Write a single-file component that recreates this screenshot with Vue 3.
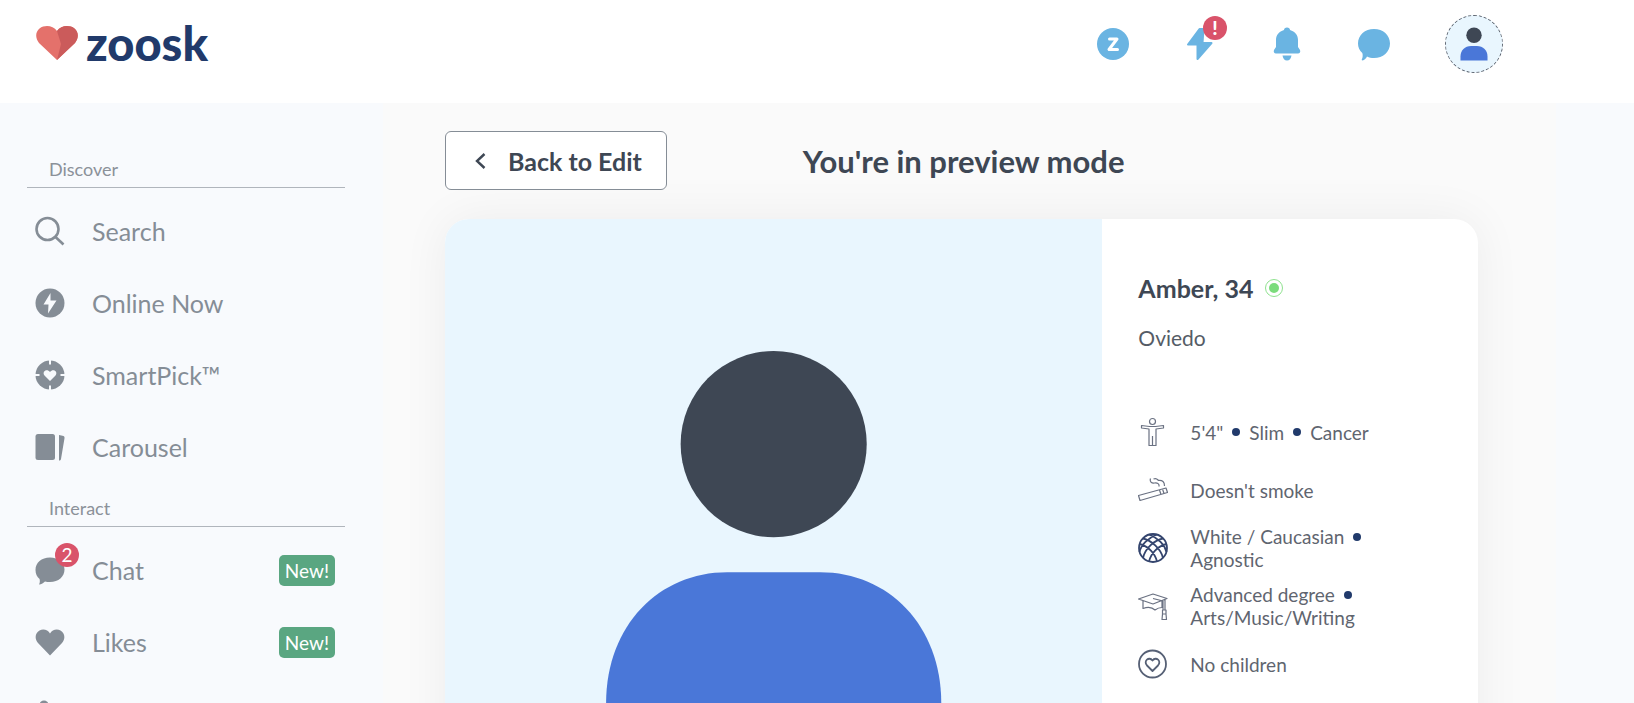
<script setup>
const discover = [
  { label: 'Search', icon: 'search' },
  { label: 'Online Now', icon: 'online' },
  { label: 'SmartPick™', icon: 'smartpick' },
  { label: 'Carousel', icon: 'carousel' }
]

const interact = [
  { label: 'Chat', icon: 'chat', count: 2, isNew: true },
  { label: 'Likes', icon: 'likes', isNew: true },
  { icon: 'people' }
]

const sections = [
  { title: 'Discover', items: discover },
  { title: 'Interact', items: interact }
]

// each detail is a list of lines, each line a list of values split by dots
const details = [
  { icon: 'body', lines: [['5\'4"', 'Slim', 'Cancer']] },
  { icon: 'smoke', lines: [["Doesn't smoke"]] },
  { icon: 'globe', lines: [['White / Caucasian', ''], ['Agnostic']] },
  { icon: 'degree', lines: [['Advanced degree', ''], ['Arts/Music/Writing']] },
  { icon: 'family', lines: [['No children']] }
]
</script>

<template>
  <div class="app">
    <header class="topbar">
      <a href="#" class="logo">
        <svg class="logo-heart" viewBox="0 0 42 36" aria-hidden="true">
          <path fill="#e4716b" d="M21 35 3 18C-1 13-.6 7 3.500 3.500 9-.5 17 .5 21 6 25 .5 33-.5 38.500 3.500 42.600 7 43 13 39 18Z" />
          <path fill="#cb5b5b" d="M21 6C25 .5 33-.5 38.500 3.500 42.600 7 43 13 39 18L21 35 25 19Z" />
        </svg>
        <span class="logo-text">zoosk</span>
      </a>
      <nav class="topnav">
        <a href="#" class="topnav-link" aria-label="Coins">
          <svg viewBox="0 0 32 32">
            <circle cx="16" cy="16" r="16" fill="#6ab4e2" />
            <path d="M12.500 11h7.500l-8 10.500h8.500" fill="none" stroke="#fff" stroke-width="3" stroke-linejoin="round" stroke-linecap="round" />
          </svg>
        </a>
        <a href="#" class="topnav-link" aria-label="Boost">
          <svg viewBox="0 0 32 32">
            <path d="M15.500 1 4 16.500h9.500L13.500 31 27.500 15h-9L19.500 1Z" fill="#6ab4e2" stroke="#6ab4e2" stroke-width="2" stroke-linejoin="round" />
          </svg>
          <span class="badge badge--top">!</span>
        </a>
        <a href="#" class="topnav-link" aria-label="Notifications">
          <svg viewBox="0 0 32 32" fill="#6ab4e2">
            <path d="M16-.5c1.800 0 3 1 3 2.500 5 1.500 8 5 8 10v7l2 3c.8 2-.3 3.500-2 3.500H5c-1.700 0-2.800-1.500-2-3.500l2-3v-7c0-5 3-8.500 8-10 0-1.500 1.200-2.500 3-2.500Z" />
            <path d="M11.500 27.500h9c-.5 3-2 5-4.500 5s-4-2-4.500-5Z" />
          </svg>
        </a>
        <a href="#" class="topnav-link" aria-label="Messages">
          <svg viewBox="0 0 32 32" fill="#6ab4e2">
            <path d="M16 1c9 0 16 6 16 14.500S25 30 16 30c-2.500 0-5-.5-7-1.500-1 2-2.500 3.500-4.500 4-.8 0-1-1-.5-1.500.7-1.500 1-4 .3-6C1.500 22.500 0 19.500 0 15.500 0 7 7 1 16 1Z" />
          </svg>
        </a>
        <a href="#" class="avatar" aria-label="Profile">
          <svg viewBox="0 0 58 58">
            <circle cx="29" cy="20" r="8" fill="#3e4754" />
            <path d="M15 46V42c0-6.500 4.500-11 11-11h6c6.500 0 11 4.500 11 11v4Z" fill="#4a77d8" />
          </svg>
        </a>
      </nav>
    </header>

    <div class="page">
      <aside class="sidebar">
        <section v-for="section in sections" :key="section.title" class="menu">
          <h2 class="menu-title">{{ section.title }}</h2>
          <ul class="menu-list">
            <li v-for="item in section.items" :key="item.icon">
              <a href="#" class="menu-item">
                <span class="menu-icon">
                  <svg v-if="item.icon === 'search'" viewBox="0 0 30 30" fill="none" stroke="#858d96" stroke-width="2.600">
                    <circle cx="12.500" cy="13" r="11" />
                    <path d="m20.500 21 8 7.500" />
                  </svg>
                  <svg v-else-if="item.icon === 'online'" viewBox="0 0 30 30">
                    <circle cx="15" cy="15" r="14.500" fill="#858d96" />
                    <path d="M15.500 5 8.500 16.500h5L13 25.500 21.500 12.500h-6Z" fill="#f8fafd" />
                  </svg>
                  <svg v-else-if="item.icon === 'smartpick'" viewBox="0 0 30 30">
                    <circle cx="15" cy="15" r="14.500" fill="#858d96" />
                    <path d="M15 0v4.500M15 25.500V30M0 15h4.500M25.500 15H30" stroke="#f8fafd" stroke-width="2" />
                    <path d="M15 21 9.500 15.500c-3-4 2.500-7.500 5.500-3.500 3-4 8.500-.5 5.500 3.500Z" fill="#f8fafd" />
                  </svg>
                  <svg v-else-if="item.icon === 'carousel'" viewBox="0 0 30 30" fill="#858d96">
                    <rect x=".5" y="2" width="19.500" height="26" rx="2.500" />
                    <path d="M24 3l3.500.7c1.500.2 2.300 1 2 2.500L26 27c-.2 1-1 1.500-2 1.500Z" />
                  </svg>
                  <svg v-else-if="item.icon === 'chat'" viewBox="0 0 30 30" fill="#858d96">
                    <path d="M15 2.500c8.500 0 14.500 5 14.500 12S23.500 27 15 27c-2 0-3.500-.2-5-.6-1.500 1.500-3.500 3-6 3.100 1-1.500 1-3.500.6-5.500C2 22 .5 19 .5 15c0-7.500 6-12.500 14.500-12.500Z" />
                  </svg>
                  <svg v-else-if="item.icon === 'likes'" viewBox="0 0 30 30" fill="#858d96">
                    <path d="M15 28.500 3 16C-1 11.500.5 5.500 4.500 3.500 8.500 1.500 13 3 15 6.500 17 3 21.500 1.500 25.500 3.500 29.500 5.500 31 11.500 27 16Z" />
                  </svg>
                  <svg v-else viewBox="0 0 30 30" fill="#858d96">
                    <circle cx="9" cy="6" r="4.500" />
                    <path d="M1 24c0-7 3-11 8-11s8 4 8 11Z" />
                  </svg>
                  <span v-if="item.count" class="badge badge--menu">{{ item.count }}</span>
                </span>
                <span v-if="item.label" class="menu-label">{{ item.label }}</span>
                <span v-if="item.isNew" class="tag">New!</span>
              </a>
            </li>
          </ul>
        </section>
      </aside>

      <main class="main">
        <div class="preview-bar">
          <button type="button" class="back">
            <svg class="back-icon" viewBox="0 0 12 16" aria-hidden="true">
              <path d="M10.500 1 3 8l7.500 7" fill="none" stroke="#3e4754" stroke-width="2.400" />
            </svg>
            Back to Edit
          </button>
          <h1 class="preview-title">You're in preview mode</h1>
        </div>

        <article class="card">
          <div class="photo">
            <svg viewBox="0 0 657 657" aria-hidden="true">
              <circle cx="328.500" cy="225" r="93" fill="#3e4754" />
              <path d="M161 529V484C161 406 214 353 282 353h93c68 0 121 53 121 131v45Z" fill="#4a77d8" />
            </svg>
          </div>
          <div class="info">
            <h2 class="name">Amber, 34 <span class="online"></span></h2>
            <p class="city">Oviedo</p>
            <ul class="details">
              <li v-for="detail in details" :key="detail.icon" class="detail">
                <svg v-if="detail.icon === 'body'" class="detail-icon" viewBox="0 0 30 30">
                  <circle cx="14.500" cy="4.500" r="3" />
                  <path d="M11.500 9.500 3.500 8.500v2.500l7.500 1V28.500h7V12l7.500-1V8.500l-8 1ZM14.500 19v9.500" />
                </svg>
                <svg v-else-if="detail.icon === 'smoke'" class="detail-icon" viewBox="0 0 30 30">
                  <path d="m.5 20.500 27.500-7.500 1.500 4.500L2 25.500ZM21.500 15l1.500 4.500M24.500 14l1.500 4.500M12.500 3.500c-1 3 1 5 4 4.500 3-.5 5 1 4.500 3.500M15.500 4c3-1.500 4 .5 5 1.500 4-.5 6 1.500 6 5.500" />
                </svg>
                <svg v-else-if="detail.icon === 'globe'" class="detail-icon detail-icon--globe" viewBox="0 0 30 30">
                  <circle cx="15" cy="15" r="14" />
                  <path d="M5 5.500C13 7 23 16 25 25M11 1.500C20 5 27 12 28.500 19M1.500 11C10 13 17 20 19 28.500M25 5.500C16 7 7 16 5 25M19 1.500C10 5 3 12 1.500 19M28.500 11C20 13 13 20 11 28.500" />
                </svg>
                <svg v-else-if="detail.icon === 'degree'" class="detail-icon" viewBox="0 0 30 30">
                  <path d="M.5 8 15 3l14 4.500-14 5.500ZM5 10v7.500c5-2 9-1.500 12 1.500 2-1.500 4-2.500 7-2.500V10M15 7.500l10 2.500v9M27 8.500V19M24.500 19h3.500v4h-3.500ZM24.500 23 24 28.500h4.500L28 23" />
                </svg>
                <svg v-else class="detail-icon detail-icon--family" viewBox="0 0 30 30">
                  <circle cx="14.500" cy="15" r="13.500" />
                  <path d="m14.500 22-5.500-5.500c-4-4.500 2-9.500 5.500-5 3.500-4.500 9.500.5 5.500 5Z" />
                </svg>
                <div class="detail-text">
                  <div v-for="(line, i) in detail.lines" :key="i" class="detail-line">
                    <template v-for="(value, j) in line" :key="j">
                      <span v-if="j > 0" class="dot"></span>
                      <span v-if="value">{{ value }}</span>
                    </template>
                  </div>
                </div>
              </li>
            </ul>
          </div>
        </article>
      </main>
    </div>
  </div>
</template>

<style>
body {
  margin: 0;
  background: #f8fafd;
}
</style>

<style scoped>
.app {
  display: flex;
  flex-direction: column;
  height: 100vh;
  overflow: hidden;
  font-family: Lato, "Liberation Sans", sans-serif;
  color: #3e4754;
}

svg {
  display: block;
}

a {
  color: inherit;
  text-decoration: none;
}

ul {
  list-style: none;
  margin: 0;
  padding: 0;
}

.topbar {
  display: flex;
  flex-shrink: 0;
  align-items: flex-start;
  justify-content: space-between;
  box-sizing: border-box;
  height: 103px;
  padding: 15px 131px 0 36px;
  background: #fff;
}

.logo {
  display: flex;
  align-items: center;
  gap: 8px;
}

.logo-heart {
  width: 42px;
  height: 36px;
}

.logo-text {
  font-size: 47px;
  line-height: 56px;
  font-weight: 900;
  color: #213a6b;
}

.topnav {
  display: flex;
  align-items: center;
  gap: 55px;
}

.topnav-link {
  position: relative;
  width: 32px;
  height: 32px;
}

.topnav-link svg {
  width: 32px;
  height: 32px;
  overflow: visible;
}

.badge {
  position: absolute;
  width: 24px;
  height: 24px;
  border-radius: 50%;
  background: #d9536a;
  color: #fff;
  font-size: 19px;
  line-height: 24px;
  text-align: center;
}

.badge--top {
  top: -12px;
  right: -11px;
  font-weight: 900;
}

.badge--menu {
  top: -12px;
  right: -14px;
}

.avatar {
  box-sizing: border-box;
  width: 58px;
  height: 58px;
  border: 1px dashed #5c6470;
  border-radius: 50%;
  background: #e9f6fe;
}

.page {
  display: flex;
  flex: 1;
  min-height: 0;
}

.sidebar {
  box-sizing: border-box;
  width: 383px;
  padding: 48px 38px 0 27px;
}

.menu-title {
  margin: 0;
  padding: 6px 22px;
  border-bottom: 1px solid #b0b5bc;
  color: #8b9199;
  font-size: 18px;
  line-height: 24px;
  font-weight: 400;
}

.menu-list {
  padding: 7px 0;
}

.menu-item {
  display: flex;
  align-items: center;
  height: 72px;
  padding: 0 10px 0 8px;
}

.menu-icon {
  position: relative;
  width: 30px;
  height: 30px;
  margin-right: 27px;
}

.menu-label {
  flex: 1;
  color: #858d96;
  font-size: 25px;
  line-height: 30px;
}

.tag {
  padding: 0 6px;
  border-radius: 5px;
  background: #5aa681;
  color: #fff;
  font-size: 19px;
  line-height: 31px;
}

.main {
  flex: 1;
  margin-right: 78px;
  padding: 28px 78px 0 62px;
  background: #fafafa;
}

.preview-bar {
  display: flex;
  align-items: center;
  margin-bottom: 29px;
}

.back {
  display: flex;
  align-items: center;
  gap: 22px;
  height: 59px;
  padding: 0 24px 0 28px;
  border: 1px solid #858d96;
  border-radius: 6px;
  background: #fff;
  color: #3e4754;
  font-family: inherit;
  font-size: 25px;
  font-weight: 700;
  cursor: pointer;
}

.back-icon {
  width: 12px;
  height: 16px;
}

.preview-title {
  margin: 0 0 0 136px;
  font-size: 31px;
  line-height: 36px;
  font-weight: 700;
}

.card {
  display: grid;
  grid-template-columns: 7fr 4fr;
  border-radius: 24px;
  background: #fff;
  box-shadow: 0 0 48px rgba(0, 0, 0, 0.06);
  overflow: hidden;
}

.photo {
  background: #e9f6fe;
}

.info {
  padding: 54px 36px 0;
}

.name {
  display: flex;
  align-items: center;
  gap: 12px;
  margin: 0;
  font-size: 25px;
  line-height: 30px;
  font-weight: 700;
}

.online {
  box-sizing: border-box;
  width: 18px;
  height: 18px;
  padding: 3px;
  border: 1px solid #8fe28f;
  border-radius: 50%;
  background: #7bdc7c content-box;
}

.city {
  margin: 22px 0 0;
  font-size: 21px;
  line-height: 26px;
  color: #555c66;
}

.details {
  margin-top: 52px;
}

.detail {
  display: flex;
  align-items: center;
  gap: 22px;
  min-height: 58px;
}

.detail-icon {
  width: 30px;
  height: 30px;
  fill: none;
  stroke: #6a7182;
  stroke-width: 1.2;
  stroke-linejoin: round;
}

.detail-icon--globe {
  stroke: #34456e;
  stroke-width: 1.8;
}

.detail-icon--family {
  stroke: #566075;
  stroke-width: 1.8;
}

.detail-text {
  color: #5f656f;
  font-size: 19px;
  line-height: 23px;
}

.detail-line {
  display: flex;
  align-items: center;
  gap: 9px;
}

.dot {
  width: 8px;
  height: 8px;
  border-radius: 50%;
  background: #213a6b;
}
</style>
